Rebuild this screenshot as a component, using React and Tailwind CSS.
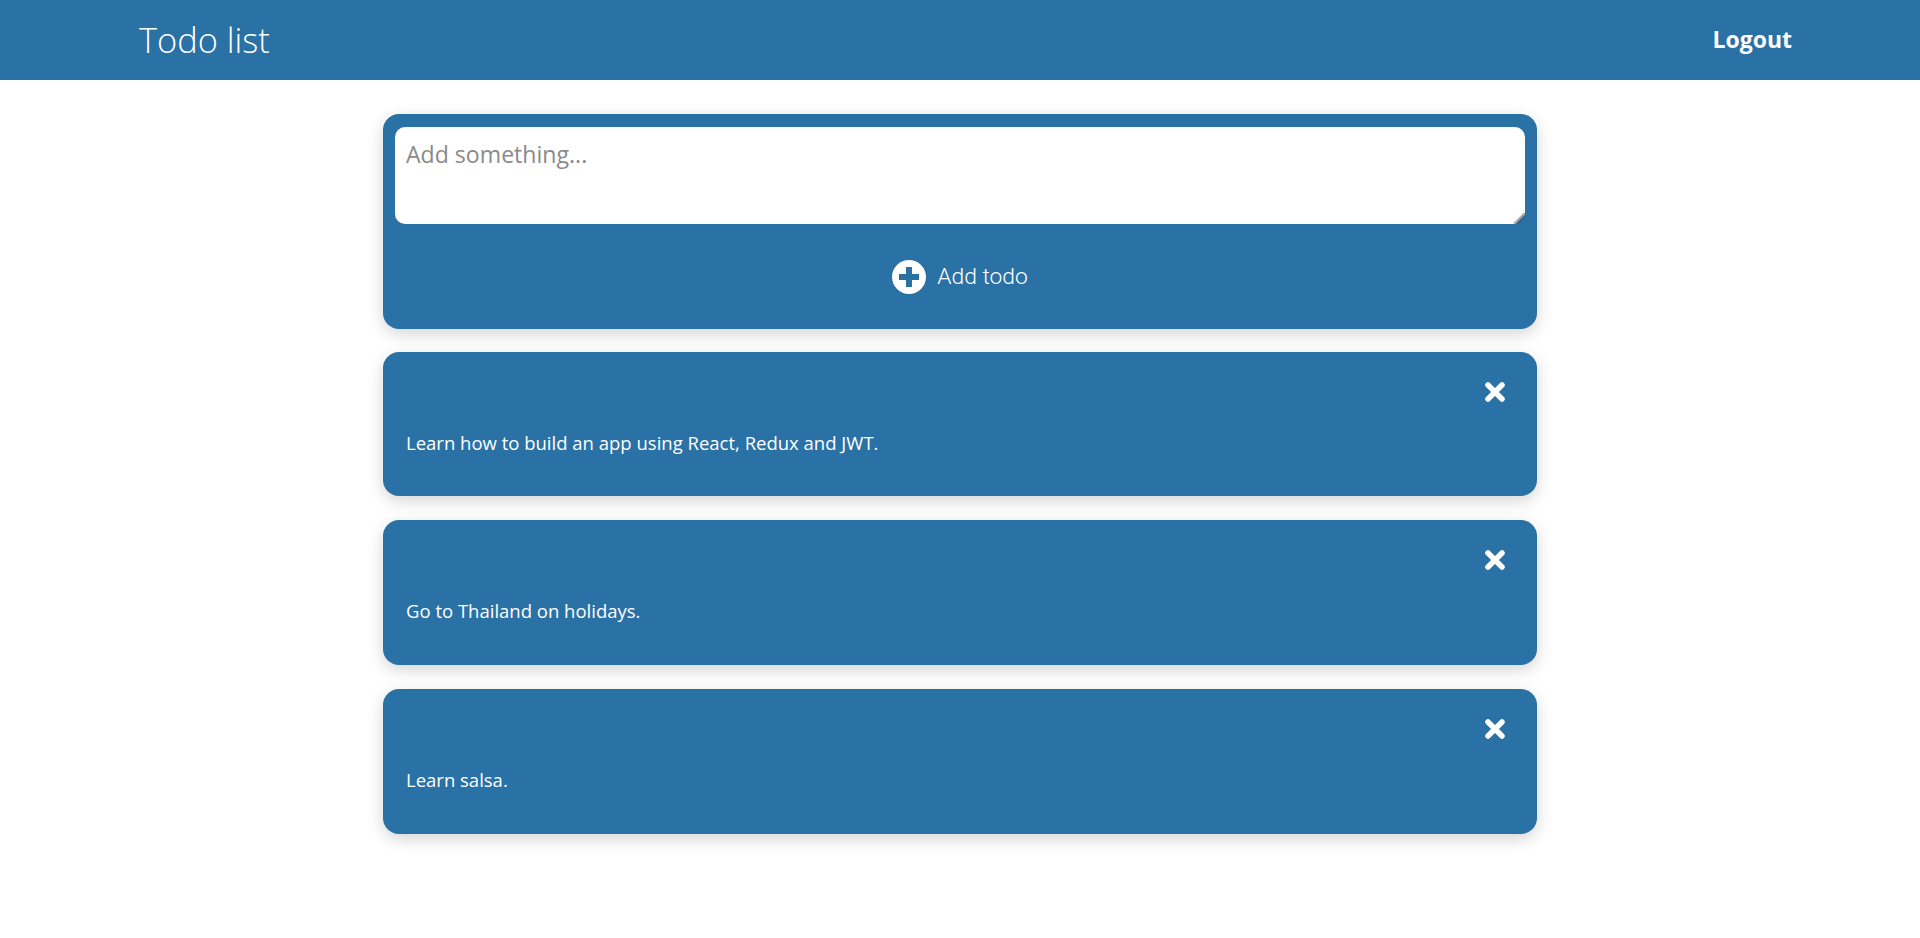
import React from "react";

const Plus = () => (
  <svg width="34" height="34" viewBox="0 0 34 34" className="block">
    <circle cx="17" cy="17" r="17" fill="#fff" />
    <path d="M14 7h6v7h7v6h-7v7h-6v-7H7v-6h7z" fill="#2a71a5" />
  </svg>
);

const X = () => (
  <svg width="22" height="22" viewBox="0 0 22 22" className="block">
    <path d="M4 4l14 14M18 4L4 18" stroke="#fff" strokeWidth="5.5" strokeLinecap="round" />
  </svg>
);

const Grip = () => (
  <svg width="11" height="11" viewBox="0 0 11 11" className="absolute right-0 bottom-0 block">
    <path d="M0 11L11 0V11z" fill="#2a71a5" />
    <path d="M0.5 10.5L10.5 0.5" stroke="#a8a8a8" strokeWidth="2.2" />
    <path d="M4 10.5L10.5 4" stroke="#1f5a85" strokeWidth="1.2" strokeDasharray="1.4 1.4" />
  </svg>
);

const todos = [
  "Learn how to build an app using React, Redux and JWT.",
  "Go to Thailand on holidays.",
  "Learn salsa.",
];

export default function App() {
  return (
    <div className="min-h-[938px] bg-white font-['Open_Sans',sans-serif] text-white">
      <header className="h-20 bg-[#2a71a5] flex items-center justify-between pl-[139px] pr-[128px]">
        <div className="text-[34.4px] font-light">Todo list</div>
        <button className="text-[23px] font-bold -mt-px">Logout</button>
      </header>
      <main className="w-[1154px] mx-auto pt-[34px] flex flex-col gap-6">
        <div className="h-[215px] -mb-px rounded-[16px] bg-[#2a71a5] shadow-[0_5px_16px_rgba(0,0,0,0.17)] pt-[13px] px-3 flex flex-col">
          <div className="relative h-[97px]">
            <textarea
              placeholder="Add something..."
              className="w-full h-full resize-none rounded-[10px] bg-white px-[11px] pt-[10px] text-[23.1px] text-black placeholder:text-[#8a8a8a] outline-none block"
            />
            <Grip />
          </div>
          <div className="h-[105px] flex items-center justify-center gap-[11px]">
            <Plus />
            <span className="mt-[2px] text-[22.8px] font-['Roboto',sans-serif] font-light">Add todo</span>
          </div>
        </div>
        {todos.map((t) => (
          <div key={t} className="h-[144.4px] last:h-[145px] rounded-[16px] bg-[#2a71a5] shadow-[0_5px_16px_rgba(0,0,0,0.17)] pl-[23px] pr-[31px] pt-[29px] flex flex-col">
            <div className="flex justify-end"><X /></div>
            <p className="mt-[26px] text-[18.5px]">{t}</p>
          </div>
        ))}
      </main>
    </div>
  );
}
